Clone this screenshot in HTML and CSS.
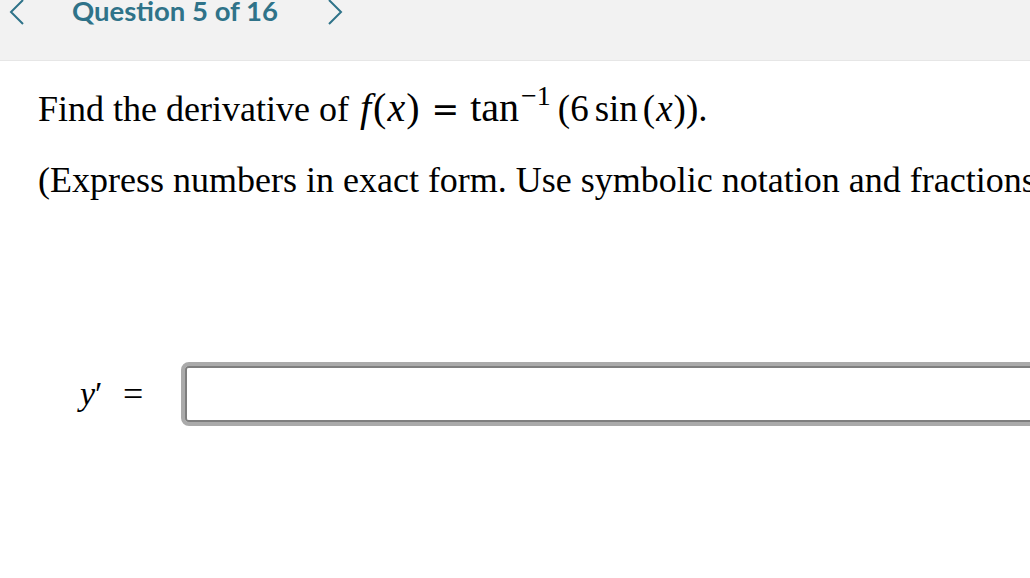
FILE: index.html
```html
<!DOCTYPE html>
<html>
<head>
<meta charset="utf-8">
<link rel="stylesheet" href="styles.css">
</head>
<body>
<header class="topbar">
  <svg class="chev chev-left" width="16" height="28" viewBox="0 0 16 28"><polyline points="14,1 2,13 14,25" fill="none" stroke="#2f7389" stroke-width="2"/></svg>
  <div class="title">Question 5 of 16</div>
  <svg class="chev chev-right" width="16" height="28" viewBox="0 0 16 28"><polyline points="2,1 14,13 2,25" fill="none" stroke="#2f7389" stroke-width="2"/></svg>
</header>
<main class="content">
  <p class="line line1">Find the derivative of <span class="math"><i class="mf">f</i><span class="pl">(</span><i class="mx">x</i><span class="pr">)</span><span class="eq">=</span><span class="fn">tan</span><sup>−1</sup><span class="arg"><span class="pl2">(</span>6<span class="fn sin">sin</span><span class="pl">(</span><i class="mx">x</i><span class="pr">))</span>.</span></span></p>
  <p class="line line2">(Express numbers in exact form. Use symbolic notation and fractions where needed.)</p>
  <div class="answer">
    <span class="lhs"><i>y</i>′</span>
    <span class="eq2">=</span>
    <div class="inputbox"></div>
  </div>
</main>
</body>
</html>
```
FILE: styles.css
```css
html, body {
  margin: 0;
  padding: 0;
  background: #ffffff;
  overflow: hidden;
  width: 1030px;
  height: 578px;
}
.topbar {
  height: 60px;
  background: #f2f2f2;
  border-bottom: 1px solid #e6e6e6;
  display: flex;
  align-items: flex-start;
}
.chev {
  display: block;
  flex: 0 0 auto;
  margin-top: -1px;
}
.chev-left {
  margin-left: 9px;
}
.title {
  flex: 0 0 auto;
  margin-left: 47px;
  margin-top: -7px;
  font-family: "Lato", "Open Sans", sans-serif;
  font-weight: 700;
  font-size: 27.5px;
  line-height: 36px;
  color: #2f7389;
  width: 255px;
  white-space: nowrap;
}
.content {
  padding-left: 38px;
  font-family: "Liberation Serif", "Times New Roman", serif;
  color: #000;
  white-space: nowrap;
  overflow: hidden;
}
.line {
  margin: 0;
  font-size: 36px;
  line-height: 40px;
  height: 40px;
}
.line1 {
  margin-top: 27px;
}
.line2 {
  margin-top: 32px;
}
.math {
  font-size: 40px;
  margin-left: 2px;
}
.math i {
  font-style: italic;
}
.mf {
  margin-right: 2px;
}
.mx {
  margin-left: 1px;
  margin-right: 1px;
}
.eq {
  display: inline-block;
  font-family: "DejaVu Serif", serif;
  font-size: 33px;
  margin: 0 11px 0 12px;
}
.math sup {
  font-size: 28px;
  vertical-align: 0;
  position: relative;
  top: -16px;
  margin-left: 2px;
}
.arg {
  font-size: 37px;
}
.pl2 {
  margin-left: 7px;
}
.sin {
  margin-left: 6px;
  margin-right: 5px;
}
.answer {
  display: flex;
  align-items: center;
  margin-top: 162px;
  margin-left: 42px;
  font-size: 34px;
}
.lhs {
  flex: 0 0 auto;
  width: 43px;
}
.eq2 {
  flex: 0 0 auto;
  width: 58px;
  font-size: 36px;
}
.inputbox {
  flex: 0 0 auto;
  width: 900px;
  height: 56px;
  border: 4px solid #aaaaaa;
  border-radius: 8px;
  box-shadow: inset 0 2px 0 #7e7e7e, inset 2px 0 0 #7e7e7e, inset 0 -2px 0 #7e7e7e;
  background: #fff;
}
```
